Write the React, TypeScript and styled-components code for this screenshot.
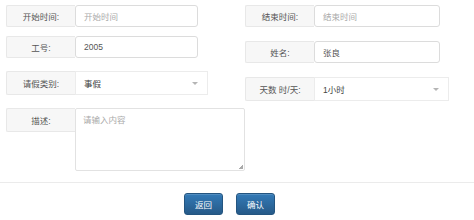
import styled, { createGlobalStyle } from "styled-components";

const GlobalStyle = createGlobalStyle`
  html, body {
    margin: 0;
    padding: 0;
    background: #fff;
  }
  body {
    font-family: "Liberation Sans", "Noto Sans CJK SC", sans-serif;
    font-size: 8.5px;
    color: #555;
  }
`;

const Page = styled.div`
  width: 474px;
  height: 220px;
  overflow: hidden;
`;

const Fields = styled.div`
  display: flex;
  padding: 5px 0 0 6px;
`;

const Column = styled.div<{ $width: number }>`
  width: ${(p) => p.$width}px;
  display: flex;
  flex-direction: column;
`;

const Row = styled.div<{ $top?: number }>`
  display: flex;
  margin-top: ${(p) => p.$top || 0}px;
`;

const Label = styled.div<{ $height?: number }>`
  width: 69px;
  height: ${(p) => p.$height || 22}px;
  box-sizing: border-box;
  display: flex;
  align-items: center;
  justify-content: center;
  background: #f7f7f7;
  border: 1px solid #e8e8e8;
  border-right: none;
  border-radius: 2px 0 0 2px;
  color: #555;
  flex-shrink: 0;
`;

const Input = styled.div<{ $width: number; $placeholder?: boolean }>`
  width: ${(p) => p.$width}px;
  height: 22px;
  box-sizing: border-box;
  border: 1px solid #dcdcdc;
  border-radius: 3px;
  background: #fff;
  padding-left: 8px;
  display: flex;
  align-items: center;
  color: ${(p) => (p.$placeholder ? "#aaa" : "#555")};
`;

const Select = styled.div<{ $width: number }>`
  width: ${(p) => p.$width}px;
  height: 24px;
  box-sizing: border-box;
  border: 1px solid #ececec;
  background: #fff;
  padding: 0 9px 0 8px;
  display: flex;
  align-items: center;
  justify-content: space-between;
  color: #444;
`;

const Caret = styled.span`
  width: 0;
  height: 0;
  border-left: 3.5px solid transparent;
  border-right: 3.5px solid transparent;
  border-top: 3.5px solid #b5b5b5;
`;

const TextArea = styled.div`
  position: relative;
  width: 346px;
  height: 63px;
  box-sizing: border-box;
  border: 1px solid #e2e2e2;
  border-radius: 2px;
  background: #fff;
  padding: 4px 7px;
  color: #aaa;
`;

const Grip = styled.span`
  position: absolute;
  right: 1px;
  bottom: 1px;
  width: 4px;
  height: 4px;
  background: linear-gradient(135deg, transparent 50%, #aaa 50%);
`;

const Divider = styled.div`
  margin-top: 11px;
  height: 1px;
  background: #ebebeb;
`;

const Actions = styled.div`
  display: flex;
  gap: 13px;
  padding: 10px 0 0 184px;
`;

const Button = styled.button`
  width: 39px;
  height: 22px;
  box-sizing: border-box;
  border: 1px solid #245580;
  border-radius: 3px;
  background: linear-gradient(to bottom, #337ab7 0%, #265a88 100%);
  color: #fff;
  font-family: "Liberation Sans", "Noto Sans CJK SC", sans-serif;
  font-size: 8.5px;
  padding: 0;
  box-shadow: inset 0 1px 0 rgba(255, 255, 255, 0.15);
`;

export default function App() {
  return (
    <Page>
      <GlobalStyle />
      <Fields>
        <Column $width={239}>
          <Row>
            <Label>开始时间:</Label>
            <Input $width={123} $placeholder>开始时间</Input>
          </Row>
          <Row $top={9}>
            <Label>工号:</Label>
            <Input $width={123}>2005</Input>
          </Row>
          <Row $top={13}>
            <Label $height={24}>请假类别:</Label>
            <Select $width={133}>
              事假
              <Caret />
            </Select>
          </Row>
          <Row $top={13}>
            <Label $height={24}>描述:</Label>
            <TextArea>
              请输入内容
              <Grip />
            </TextArea>
          </Row>
        </Column>
        <Column $width={229}>
          <Row>
            <Label $height={22}>结束时间:</Label>
            <Input $width={126} $placeholder>结束时间</Input>
          </Row>
          <Row $top={14}>
            <Label>姓名:</Label>
            <Input $width={126}>张良</Input>
          </Row>
          <Row $top={14}>
            <Label $height={24}>天数 时/天:</Label>
            <Select $width={135}>
              1小时
              <Caret />
            </Select>
          </Row>
        </Column>
      </Fields>
      <Divider />
      <Actions>
        <Button>返回</Button>
        <Button>确认</Button>
      </Actions>
    </Page>
  );
}
